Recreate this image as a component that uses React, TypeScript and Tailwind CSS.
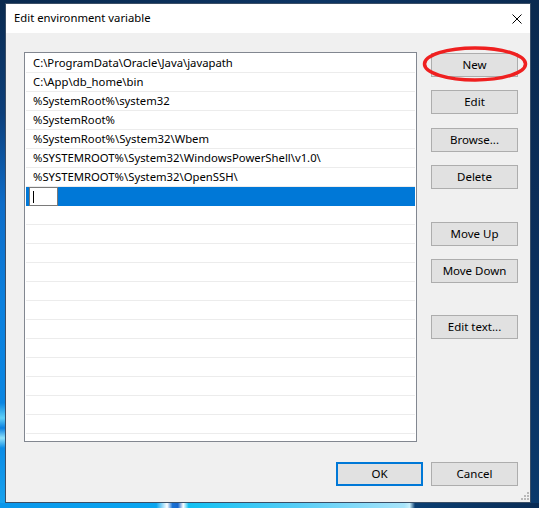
import React from 'react'

const paths = [
    'C:\\ProgramData\\Oracle\\Java\\javapath',
    'C:\\App\\db_home\\bin',
    '%SystemRoot%\\system32',
    '%SystemRoot%',
    '%SystemRoot%\\System32\\Wbem',
    '%SYSTEMROOT%\\System32\\WindowsPowerShell\\v1.0\\',
    '%SYSTEMROOT%\\System32\\OpenSSH\\',
]

const TOTAL_ROWS = 20

function WinButton({ label, className = '' }: { label: string; className?: string }) {
    return (
        <button
            className={`w-[87px] h-[24px] bg-[#e1e1e1] border border-[#adadad] text-[11.5px] text-black flex items-center justify-center leading-none ${className}`}
        >
            {label}
        </button>
    )
}

export default function App() {
    const emptyCount = TOTAL_ROWS - paths.length - 1

    return (
        <div className="relative w-[539px] h-[508px] flex flex-col bg-[#0b2d57] overflow-hidden font-['Segoe_UI','Noto_Sans',sans-serif]">
            {/* Desktop strip above the window */}
            <div className="h-[3px] bg-[linear-gradient(to_right,#0a2a4f,#0c3564_60%,#0a2a50)]" />

            <div className="flex h-[500px]">
                {/* Left edge of the desktop */}
                <div className="w-[5px] bg-[linear-gradient(to_bottom,#0a2a4f_0%,#0c3f7a_22%,#0d6cc8_40%,#0b80de_60%,#0a86e2_80%,#5fd0f8_83%,#0a7fe0_85%,#8fe2fb_87%,#0b8ce6_89%,#18a2ee_100%)]" />

                {/* Dialog window */}
                <div className="relative w-[526px] h-full border border-[#3a4e66] bg-[#f0f0f0] flex flex-col">
                    {/* Title bar */}
                    <div className="h-[29px] bg-white flex items-center justify-between pl-[8px] pr-[8px]">
                        <span className="text-[11.3px] text-black">Edit environment variable</span>
                        <svg width="10" height="10" viewBox="0 0 10 10" className="mt-px">
                            <path d="M0.5 0.5 L9.5 9.5 M9.5 0.5 L0.5 9.5" stroke="#000" strokeWidth="1" />
                        </svg>
                    </div>

                    {/* Body */}
                    <div className="flex-1 flex flex-col pl-[18px] pr-[12px] pt-[19px]">
                        <div className="flex">
                            {/* Path list */}
                            <div className="w-[393px] h-[390px] border border-[#828790] bg-white p-px overflow-hidden">
                                {paths.map((p) => (
                                    <div
                                        key={p}
                                        className="h-[19px] border-b border-[#ececec] flex items-center pl-[7px] text-[11.3px] text-black whitespace-nowrap"
                                    >
                                        {p}
                                    </div>
                                ))}
                                <div className="h-[19px] bg-[#0078d7] flex items-stretch pl-[3px]">
                                    <div className="w-[29px] bg-white border border-[#7a7a7a] flex items-center pl-[3px]">
                                        <div className="w-px h-[12px] bg-black" />
                                    </div>
                                </div>
                                {Array.from({ length: emptyCount }).map((_, i) => (
                                    <div key={i} className="h-[19px] border-b border-[#ececec]" />
                                ))}
                            </div>

                            {/* Action buttons */}
                            <div className="ml-[14px] flex flex-col">
                                <WinButton label="New" className="mt-px" />
                                <WinButton label="Edit" className="mt-[13px]" />
                                <WinButton label="Browse..." className="mt-[14px]" />
                                <WinButton label="Delete" className="mt-[13px]" />
                                <WinButton label="Move Up" className="mt-[33px]" />
                                <WinButton label="Move Down" className="mt-[13px]" />
                                <WinButton label="Edit text..." className="mt-[32px]" />
                            </div>
                        </div>

                        {/* OK / Cancel */}
                        <div className="mt-[20px] flex justify-end gap-[8px]">
                            <button className="w-[87px] h-[24px] bg-[#e1e1e1] border-2 border-[#0078d7] text-[11.5px] text-black flex items-center justify-center leading-none">
                                OK
                            </button>
                            <WinButton label="Cancel" />
                        </div>
                    </div>

                    {/* Resize grip */}
                    <svg width="8" height="8" viewBox="0 0 8 8" className="absolute right-px bottom-[2px]">
                        <rect x="6" y="0" width="2" height="2" fill="#b8b8b8" />
                        <rect x="3" y="3" width="2" height="2" fill="#b8b8b8" />
                        <rect x="6" y="3" width="2" height="2" fill="#b8b8b8" />
                        <rect x="0" y="6" width="2" height="2" fill="#b8b8b8" />
                        <rect x="3" y="6" width="2" height="2" fill="#b8b8b8" />
                        <rect x="6" y="6" width="2" height="2" fill="#b8b8b8" />
                    </svg>
                </div>

                {/* Right edge of the desktop */}
                <div className="w-[8px] bg-[linear-gradient(to_bottom,#0a2a4f,#0b2f5c_50%,#0b3a6c)]" />
            </div>

            {/* Taskbar glow under the window */}
            <div className="h-[5px] bg-[linear-gradient(to_right,#0a96ea_0%,#0aa6f0_29%,#ffffff_31%,#1a72d4_32%,#1666cc_33%,#ffffff_34%,#12c0f2_35%,#56cdf6_55%,#a8e4fa_75%,#c8effc_76%,#0a3e72_77%,#0a2c55_100%)]" />

            {/* Red highlight around New */}
            <svg width="106" height="38" viewBox="0 0 106 38" className="absolute left-[422px] top-[45px] pointer-events-none">
                <ellipse cx="53" cy="19" rx="50.5" ry="16" fill="none" stroke="#ef2020" strokeWidth="3.5" />
            </svg>
        </div>
    )
}
